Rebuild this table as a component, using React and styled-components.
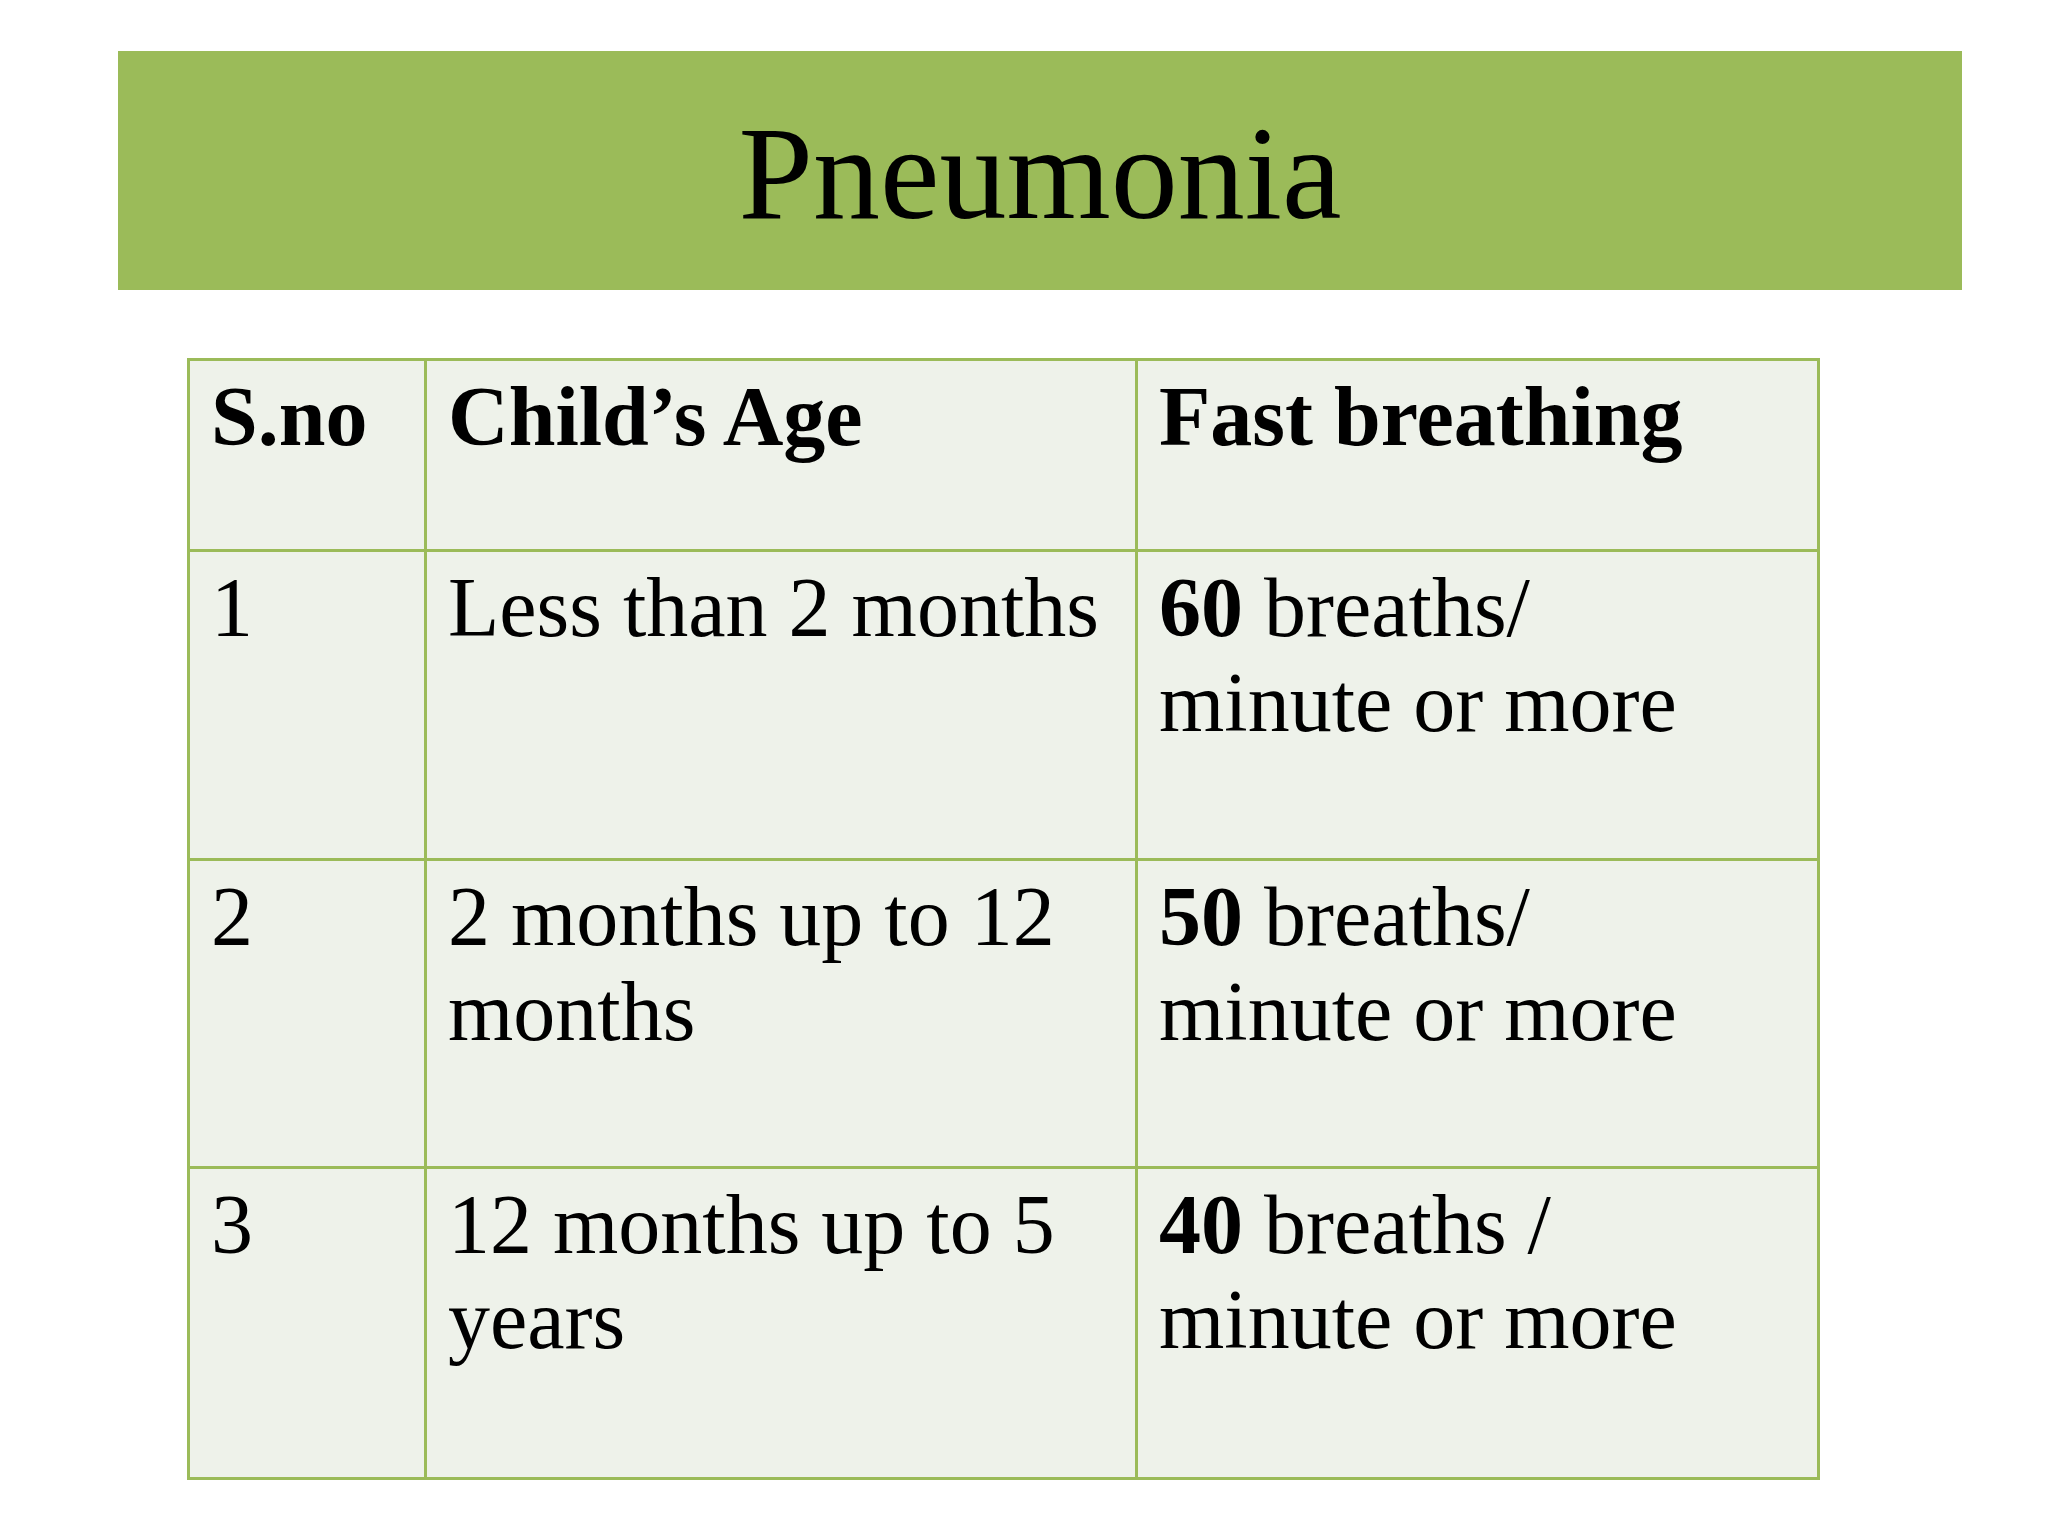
import React from "react";
import styled, { createGlobalStyle } from "styled-components";

const GlobalStyle = createGlobalStyle`
  html, body {
    margin: 0;
    padding: 0;
    background: #ffffff;
  }
  body {
    font-family: "Liberation Serif", "DejaVu Serif", serif;
    color: #000;
  }
`;

const Slide = styled.div`
  width: 2048px;
  height: 1536px;
  padding-top: 51px;
  box-sizing: border-box;
  display: flex;
  flex-direction: column;
`;

const TitleBar = styled.div`
  margin-left: 118px;
  width: 1844px;
  height: 239px;
  background: #9bbb59;
  display: flex;
  align-items: center;
  justify-content: center;
`;

const Title = styled.h1`
  margin: 0;
  font-weight: normal;
  font-size: 134px;
  line-height: 1;
  padding-top: 4px;
  color: #000;
`;

const Table = styled.table`
  margin-top: 68px;
  margin-left: 187px;
  width: 1630px;
  border-collapse: collapse;
  table-layout: fixed;
  background: #eef2ea;
`;

const Row = styled.tr`
  height: ${(p) => p.$h}px;
`;

const Cell = styled.td`
  border: 3px solid #9bbb59;
  vertical-align: top;
  padding: 8px 20px 0 21px;
  font-size: 84px;
  line-height: 95px;
  font-weight: ${(p) => (p.$head ? "bold" : "normal")};
  white-space: nowrap;
`;

const rows = [
  { n: "1", age: ["Less than 2 months"], rate: "60", rest: " breaths/", h: 309 },
  { n: "2", age: ["2 months up to 12", "months"], rate: "50", rest: " breaths/", h: 308 },
  { n: "3", age: ["12 months up to 5", "years"], rate: "40", rest: " breaths /", h: 311 },
];

export default function App() {
  return (
    <Slide>
      <GlobalStyle />
      <TitleBar>
        <Title>Pneumonia</Title>
      </TitleBar>
      <Table>
        <colgroup>
          <col style={{ width: 237 }} />
          <col style={{ width: 711 }} />
          <col style={{ width: 682 }} />
        </colgroup>
        <tbody>
          <Row $h={191}>
            <Cell $head>S.no</Cell>
            <Cell $head>Child’s Age</Cell>
            <Cell $head>Fast breathing</Cell>
          </Row>
          {rows.map((r) => (
            <Row key={r.n} $h={r.h}>
              <Cell>{r.n}</Cell>
              <Cell>
                {r.age.map((line, i) => (
                  <React.Fragment key={i}>
                    {i > 0 && <br />}
                    {line}
                  </React.Fragment>
                ))}
              </Cell>
              <Cell>
                <b>{r.rate}</b>
                {r.rest}
                <br />
                minute or more
              </Cell>
            </Row>
          ))}
        </tbody>
      </Table>
    </Slide>
  );
}
